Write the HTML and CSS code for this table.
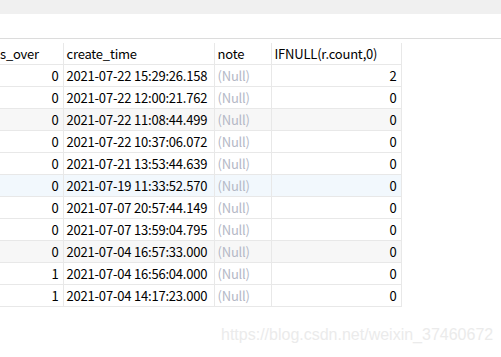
FILE: index.html
```html
<!DOCTYPE html>
<html lang="en">
  <head>
    <meta charset="UTF-8" />
    <meta name="viewport" content="width=device-width, initial-scale=1.0" />
    <title>Query Result</title>
    <link rel="stylesheet" href="styles.css">
  </head>
  <body>
    <div class="toolbar"></div>
    <div class="filter-bar"></div>

    <div class="grid-container">
      <table class="result-grid">
        <colgroup>
          <col class="col-over" />
          <col class="col-time" />
          <col class="col-note" />
          <col class="col-count" />
        </colgroup>
        <thead>
          <tr>
            <th class="clipped">s_over</th>
            <th>create_time</th>
            <th>note</th>
            <th>IFNULL(r.count,0)</th>
          </tr>
        </thead>
        <tbody>
          <tr>
            <td class="num">0</td>
            <td>2021-07-22 15:29:26.158</td>
            <td class="null">(Null)</td>
            <td class="num">2</td>
          </tr>
          <tr>
            <td class="num">0</td>
            <td>2021-07-22 12:00:21.762</td>
            <td class="null">(Null)</td>
            <td class="num">0</td>
          </tr>
          <tr class="striped">
            <td class="num">0</td>
            <td>2021-07-22 11:08:44.499</td>
            <td class="null">(Null)</td>
            <td class="num">0</td>
          </tr>
          <tr>
            <td class="num">0</td>
            <td>2021-07-22 10:37:06.072</td>
            <td class="null">(Null)</td>
            <td class="num">0</td>
          </tr>
          <tr>
            <td class="num">0</td>
            <td>2021-07-21 13:53:44.639</td>
            <td class="null">(Null)</td>
            <td class="num">0</td>
          </tr>
          <tr class="hovered">
            <td class="num">0</td>
            <td>2021-07-19 11:33:52.570</td>
            <td class="null">(Null)</td>
            <td class="num">0</td>
          </tr>
          <tr>
            <td class="num">0</td>
            <td>2021-07-07 20:57:44.149</td>
            <td class="null">(Null)</td>
            <td class="num">0</td>
          </tr>
          <tr>
            <td class="num">0</td>
            <td>2021-07-07 13:59:04.795</td>
            <td class="null">(Null)</td>
            <td class="num">0</td>
          </tr>
          <tr class="striped">
            <td class="num">0</td>
            <td>2021-07-04 16:57:33.000</td>
            <td class="null">(Null)</td>
            <td class="num">0</td>
          </tr>
          <tr>
            <td class="num">1</td>
            <td>2021-07-04 16:56:04.000</td>
            <td class="null">(Null)</td>
            <td class="num">0</td>
          </tr>
          <tr>
            <td class="num">1</td>
            <td>2021-07-04 14:17:23.000</td>
            <td class="null">(Null)</td>
            <td class="num">0</td>
          </tr>
        </tbody>
      </table>
    </div>

    <div class="watermark">https://blog.csdn.net/weixin_37460672</div>
  </body>
</html>
```

FILE: styles.css
```css
body {
  margin: 0;
  font-family: "Noto Sans CJK SC", "Noto Sans", sans-serif;
  font-size: 13px;
  letter-spacing: -0.2px;
  color: #000;
  background-color: #fff;
  width: 501px;
  height: 357px;
  overflow: hidden;
}
.toolbar {
  height: 14px;
  background-color: #f0f0f0;
}
.filter-bar {
  height: 24px;
  border-bottom: 1px solid #dcdcdc;
}
.grid-container {
  padding-top: 4px;
}
.result-grid {
  border-collapse: collapse;
  table-layout: fixed;
  width: 401px;
}
.col-over {
  width: 63px;
}
.col-time {
  width: 151px;
}
.col-note {
  width: 57px;
}
.col-count {
  width: 130px;
}
th,
td {
  height: 21px;
  padding: 0 3px;
  border-right: 1px solid #e8e8e8;
  border-bottom: 1px solid #e8e8e8;
  white-space: nowrap;
  overflow: hidden;
  line-height: 21px;
}
th {
  font-weight: normal;
  text-align: left;
}
th.clipped {
  padding-left: 0;
}
.num {
  text-align: right;
  padding-right: 4px;
}
.null {
  color: #b4b8c6;
}
.striped {
  background-color: #f7f7f7;
}
.hovered {
  background-color: #f2f8fd;
}
.watermark {
  position: absolute;
  left: 221px;
  top: 326px;
  font-family: "Liberation Sans", Arial, sans-serif;
  font-size: 16px;
  letter-spacing: 0;
  color: #ebebeb;
  white-space: nowrap;
}
```
